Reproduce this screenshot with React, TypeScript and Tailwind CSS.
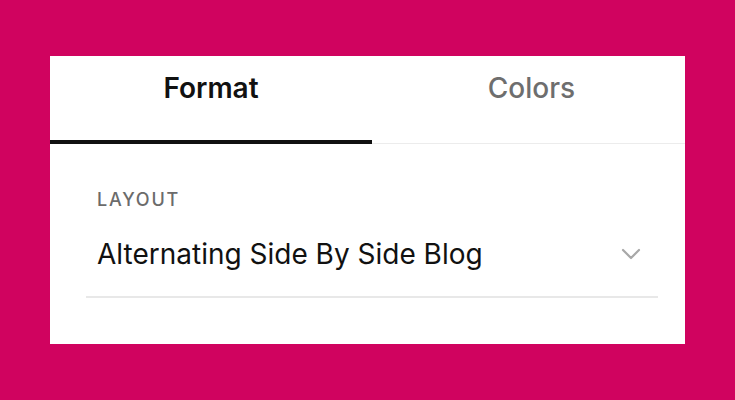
import React from "react";

const ChevronDown = () => (
  <svg width="20" height="12" viewBox="0 0 20 12" fill="none" className="text-[#a8a8a8]">
    <path d="M2 2l8 8 8-8" stroke="currentColor" strokeWidth="2.2" strokeLinecap="round" strokeLinejoin="round" />
  </svg>
);

export default function App() {
  return (
    <div className="w-[735px] h-[400px] bg-[#d0035f] pt-[56px] pl-[50px]" style={{ fontFamily: "Inter, 'Noto Sans', sans-serif" }}>
      <div className="w-[635px] h-[288px] bg-white flex flex-col">
        {/* Tabs */}
        <div className="flex h-[88px] border-b border-[#ececec]">
          <div className="w-[322px] relative flex justify-center pt-[16px]">
            <span className="text-[28px] leading-[32px] font-semibold text-[#111]">Format</span>
            <div className="absolute left-0 right-0 -bottom-px h-[4px] bg-[#111]"></div>
          </div>
          <div className="flex-1 flex justify-center pt-[16px] pl-[6px]">
            <span className="text-[28px] leading-[32px] font-medium text-[#6e6e6e]">Colors</span>
          </div>
        </div>

        {/* Layout select */}
        <div className="ml-[36px] mr-[27px] pt-[44px]">
          <div className="pl-[11px] text-[18px] leading-[24px] tracking-[0.1em] text-[#6b6b6b] font-medium">LAYOUT</div>
          <div className="flex items-center justify-between pl-[11px] pr-[17px] h-[86px] border-b-2 border-[#e8e8e8]">
            <span className="text-[28px] leading-[32px] text-[#111]">Alternating Side By Side Blog</span>
            <ChevronDown />
          </div>
        </div>
      </div>
    </div>
  );
}
